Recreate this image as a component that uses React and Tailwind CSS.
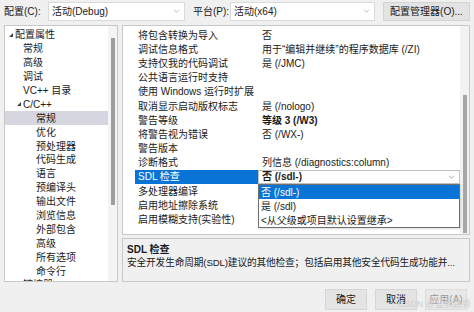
import React from 'react'

const FONT = { fontFamily: '"Liberation Sans", "Noto Sans CJK SC", sans-serif' }

const treeItems = [
  { label: '配置属性', level: 0, open: true },
  { label: '常规', level: 1 },
  { label: '高级', level: 1 },
  { label: '调试', level: 1 },
  { label: 'VC++ 目录', level: 1 },
  { label: 'C/C++', level: 1, open: true },
  { label: '常规', level: 2, selected: true },
  { label: '优化', level: 2 },
  { label: '预处理器', level: 2 },
  { label: '代码生成', level: 2 },
  { label: '语言', level: 2 },
  { label: '预编译头', level: 2 },
  { label: '输出文件', level: 2 },
  { label: '浏览信息', level: 2 },
  { label: '外部包含', level: 2 },
  { label: '高级', level: 2 },
  { label: '所有选项', level: 2 },
  { label: '命令行', level: 2 },
  { label: '链接器', level: 1, closed: true },
]

const props = [
  ['将包含转换为导入', '否'],
  ['调试信息格式', '用于“编辑并继续”的程序数据库 (/ZI)'],
  ['支持仅我的代码调试', '是 (/JMC)'],
  ['公共语言运行时支持', ''],
  ['使用 Windows 运行时扩展', ''],
  ['取消显示启动版权标志', '是 (/nologo)'],
  ['警告等级', '等级 3 (/W3)', true],
  ['将警告视为错误', '否 (/WX-)'],
  ['警告版本', ''],
  ['诊断格式', '列信息 (/diagnostics:column)'],
  ['SDL 检查', '否 (/sdl-)', true, true],
  ['多处理器编译', ''],
  ['启用地址擦除系统', ''],
  ['启用模糊支持(实验性)', ''],
]

function Chevron({ className }) {
  return (
    <svg viewBox="0 0 8 5" className={className} fill="none" stroke="currentColor" strokeWidth="1">
      <path d="M1 1l3 3 3-3" />
    </svg>
  )
}

function Combo({ width, text }) {
  return (
    <div className={`flex h-[19px] items-center justify-between border border-[#dadada] bg-white pl-[3px] pr-[4px] ${width}`}>
      <span>{text}</span>
      <Chevron className="h-[4px] w-[7px] text-[#a8a8a8]" />
    </div>
  )
}

function TreeRow({ item }) {
  const pad = item.level === 0 ? 'pl-[4px]' : item.level === 1 ? 'pl-[12px]' : 'pl-[24px]'
  return (
    <div className={`flex h-[13.9px] items-center ${pad} ${item.selected ? 'bg-[#d6d6e0]' : ''}`}>
      <span className="flex w-[6px] items-center">
        {item.open && (
          <svg viewBox="0 0 4 4" className="h-[4px] w-[4px] text-[#404040]">
            <path d="M4 0V4H0z" fill="currentColor" />
          </svg>
        )}
        {item.closed && (
          <svg viewBox="0 0 4 6" className="h-[5px] w-[4px] text-[#505050]">
            <path d="M0.5 0.5L3.5 3 0.5 5.5z" fill="none" stroke="currentColor" strokeWidth="0.8" />
          </svg>
        )}
      </span>
      <span className={item.level === 2 ? 'pl-[1px]' : ''}>{item.label}</span>
    </div>
  )
}

function PropRow({ name, value, bold, active }) {
  return (
    <div className="flex h-[14.2px] items-center">
      <div className="w-[12px] shrink-0" />
      <div className={`flex h-full w-[123px] shrink-0 items-center pl-[3px] whitespace-nowrap ${active ? 'bg-[#0a74d6] text-white' : ''}`}>
        {name}
      </div>
      {active ? (
        <div className="flex h-full flex-1 items-center justify-between border border-[#c0c0c0] bg-white pl-[3px] pr-[4px] font-bold">
          <span>{value}</span>
          <Chevron className="h-[4px] w-[7px] text-[#909090]" />
        </div>
      ) : (
        <div className={`flex-1 pl-[4px] whitespace-nowrap ${bold ? 'font-bold' : ''}`}>{value}</div>
      )}
    </div>
  )
}

export default function App() {
  return (
    <div className="relative h-[312px] w-[474px] overflow-hidden bg-[#f0f0f0] text-[10px] text-[#1a1a1a]" style={FONT}>
      <div className="flex h-[22px] items-center pl-[4px]">
        <span className="w-[44px]">配置(C):</span>
        <Combo width="w-[137px]" text="活动(Debug)" />
        <span className="ml-[8px] w-[37px]">平台(P):</span>
        <Combo width="w-[145px]" text="活动(x64)" />
        <div className="ml-[8px] flex h-[19px] w-[87px] items-center justify-center border border-[#d4d4d4] bg-[#e3e3e3]">
          配置管理器(O)...
        </div>
      </div>

      <div className="mt-[3px] flex">
        <div className="ml-[4px] flex h-[257px] w-[114px] overflow-hidden border border-[#c8c8c8] bg-white">
          <div className="flex-1 overflow-hidden pt-[2px]">
            {treeItems.map((item, i) => (
              <TreeRow key={i} item={item} />
            ))}
          </div>
          <div className="w-[9px] shrink-0 bg-[#f4f4f4] pt-[12px]">
            <div className="mx-auto h-[167px] w-[4px] bg-[#9e9e9e]" />
          </div>
        </div>

        <div className="ml-[4px] flex w-[348px] flex-col">
          <div className="relative flex h-[210px] border border-[#c8c8c8] bg-white">
            <div className="flex-1 overflow-hidden pt-[2px]">
              {props.map(([n, v, b, a], i) => (
                <PropRow key={i} name={n} value={v} bold={b} active={a} />
              ))}
            </div>
            <div className="w-[9px] shrink-0 bg-[#f2f2f2] pt-[69px]">
              <div className="mx-auto h-[138px] w-[4px] bg-[#a6a6a6]" />
            </div>
            <div className="absolute top-[158px] left-[135px] w-[202px] border border-[#6e6e6e] bg-white shadow-[1px_1px_2px_rgba(0,0,0,0.15)]">
              <div className="flex h-[14px] items-center bg-[#0a74d6] pl-[2px] text-white">否 (/sdl-)</div>
              <div className="flex h-[14px] items-center pl-[2px]">是 (/sdl)</div>
              <div className="flex h-[14px] items-center pl-[2px]">&lt;从父级或项目默认设置继承&gt;</div>
            </div>
          </div>

          <div className="mt-[3px] h-[44px] border border-[#c8c8c8] bg-[#f0f0f0] px-[4px] pt-[4px]">
            <div className="leading-[13px] font-bold">SDL 检查</div>
            <div className="overflow-hidden text-[9.7px] leading-[14px] tracking-[-0.15px] whitespace-nowrap">
              安全开发生命周期(SDL)建议的其他检查；包括启用其他安全代码生成功能并...
            </div>
          </div>
        </div>
      </div>

      <div className="mt-[7px] flex justify-end gap-[8px] pr-[7px]">
        <div className="flex h-[21px] w-[42px] items-center justify-center border border-[#d6d6d6] bg-[#e4e4e4]">确定</div>
        <div className="flex h-[21px] w-[42px] items-center justify-center border border-[#d6d6d6] bg-[#e4e4e4]">取消</div>
        <div className="flex h-[21px] w-[42px] items-center justify-center border border-[#dcdcdc] bg-[#e8e8e8] text-[#9a9a9a]">应用(A)</div>
      </div>

      <div className="absolute right-[3px] bottom-[1px] text-[9px] text-[#cfcfcf]">CSDN @蓝枫路香</div>
    </div>
  )
}
